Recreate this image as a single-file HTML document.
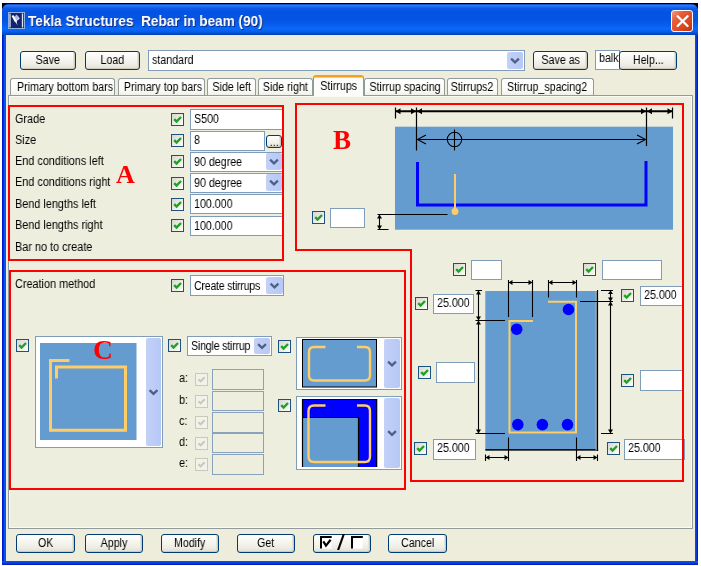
<!DOCTYPE html>
<html lang="en"><head><meta charset="utf-8"><title>Tekla Structures Rebar in beam (90)</title>
<style>
*{box-sizing:border-box;margin:0;padding:0}
html,body{width:701px;height:566px;overflow:hidden;background:#fff}
body{position:relative;font-family:"Liberation Sans",sans-serif;font-size:12px;color:#000;line-height:13px}
.a{position:absolute}
#win{left:2px;top:4px;width:696px;height:561px;background:linear-gradient(to bottom,#0a50e8 0,#0a50e8 558px,#0a3fd8 559px,#0018b8 561px);border-radius:7px 7px 0 0;overflow:hidden}
#tbar{left:0;top:0;width:696px;height:31px;background:linear-gradient(to bottom,#0a3fc0 0%,#2f7df0 5%,#1a6cf0 9%,#0a5ce8 14%,#0553e2 24%,#0553e2 50%,#075ef0 68%,#0a68fa 80%,#0760ee 88%,#0450d6 94%,#0340b0 100%)}
#ttl{left:26px;top:8.4px;color:#fff;font-weight:bold;font-size:15.5px;line-height:17px;white-space:nowrap;text-shadow:1px 1px 0 #0a2a80;transform:scaleX(0.877);transform-origin:0 0}
#client{left:4px;top:31px;width:689px;height:526px;background:#eeeddc}
.btn{position:absolute;height:18px;border:1px solid #003c74;border-radius:3px;background:linear-gradient(to bottom,#fff 0%,#f6f5ef 40%,#ecebe3 80%,#d9d4c6 100%);text-align:center;font-size:12px;line-height:16px;white-space:nowrap;box-shadow:inset -1px -1px 0 #cfcabb,inset -2px -2px 0 #e6e3d8}
.inp{position:absolute;border:1px solid #7f9db9;background:#fff;font-size:12px;line-height:13px;white-space:nowrap;overflow:hidden}
.inp span{position:absolute;left:3px;transform:scaleX(.89);transform-origin:0 0}
.sq{display:inline-block;transform:scaleX(.89)}
.lbl,.sq,.inp span,#ttl,.big{will-change:transform}
.dis{background:#eeeede;border-color:#8aa3bd}
.arr{position:absolute;background:linear-gradient(to right,#c3d1f8,#b7c8f6);border-radius:2px}
.tab{position:absolute;top:78px;height:17px;border:1px solid #919b9c;border-bottom:none;border-radius:3px 3px 0 0;background:linear-gradient(to bottom,#fff,#fbfbf8 70%,#f1f0e8);font-size:12px;line-height:17px;text-align:center;white-space:nowrap}
.red{position:absolute;background:#f00;z-index:5}
.lbl{position:absolute;white-space:nowrap;font-size:12px;line-height:13px;transform:scaleX(.905);transform-origin:0 0}
.big{position:absolute;font-family:"Liberation Serif",serif;font-weight:bold;font-size:26px;line-height:26px;color:#f00}
svg{position:absolute;overflow:visible}
</style></head>
<body>
<div class="a" style="left:2px;top:3px;width:696px;height:6px;background:#000"></div>
<div id="win" class="a">
<div id="tbar" class="a"></div>
<svg style="left:6px;top:8px" width="17" height="17" viewBox="0 0 17 17"><rect x="0.5" y="0.5" width="16" height="16" fill="#13246e" stroke="#8fb0e0"/><path d="M2 1.5V15.5M14.5 1.5V15.5" stroke="#dfe8f8" stroke-width="1.3"/><path d="M4.5 4L9.5 13.5L8.5 9L12 6.5Z" fill="#fff"/><path d="M8.5 2.5L11.5 5.5L8.5 8.5L5.8 5.5Z" fill="#a8b8ee"/><path d="M4.5 3.5L8 10" stroke="#fff" stroke-width="2"/></svg>
<div id="ttl" class="a">Tekla Structures&nbsp; Rebar in beam (90)</div>
<div class="a" style="left:669px;top:6px;width:22px;height:21.5px;border:1px solid #fff;border-radius:3px;background:linear-gradient(135deg,#f29a80 0%,#e6603a 30%,#dc4820 65%,#c23410 100%)"></div>
<svg style="left:669.5px;top:6.2px" width="21" height="21" viewBox="0 0 21 21"><path d="M5.6 6.2L15.6 16M15.6 6.2L5.6 16" stroke="#fff" stroke-width="2.3" stroke-linecap="round"/></svg>
<div class="a" style="left:0;top:31px;width:4px;height:530px;background:linear-gradient(to right,#0014cc 0,#0426da 35%,#0a5aea 65%,#0a54e6 100%)"></div>
<div class="a" style="left:693px;top:31px;width:3px;height:530px;background:linear-gradient(to right,#0a54e6 0,#0838dc 45%,#0016b8 100%)"></div>
<div class="a" style="left:0;top:557px;width:696px;height:4px;background:linear-gradient(to bottom,#0a54e6 0,#0a46e0 40%,#0018b8 100%)"></div>
<div id="client" class="a"></div>
</div>
<div class="btn" style="left:20px;top:51px;width:56px;height:19px;line-height:17px;"><span class="sq">Save</span></div>
<div class="btn" style="left:85px;top:51px;width:55px;height:19px;line-height:17px;"><span class="sq">Load</span></div>
<div class="inp " style="left:148px;top:50px;width:377px;height:21px"><span style="top:3px;">standard</span></div>
<div class="arr" style="left:507px;top:52px;width:16px;height:17px"></div>
<svg style="left:0;top:0" width="701" height="566"><path d="M511.1 58.7L515.0 62.4L518.9 58.7" fill="none" stroke="#4d6185" stroke-width="2.3"/></svg>
<div class="btn" style="left:533px;top:51px;width:55px;height:19px;line-height:17px;"><span class="sq">Save as</span></div>
<div class="inp " style="left:595px;top:50px;width:25px;height:20px"><span style="top:1px;">balk</span></div>
<div class="btn" style="left:619px;top:51px;width:58px;height:19px;line-height:17px;"><span class="sq">Help...</span></div>
<div class="a" style="left:8px;top:95px;width:685px;height:434px;border:1px solid #919b9c;background:#eeeede;box-shadow:inset 0 0 0 1px #fbfaf4"></div>
<div class="tab" style="left:10px;width:105px"><span class="sq">Primary bottom bars</span></div>
<div class="tab" style="left:118px;width:87px"><span class="sq">Primary top bars</span></div>
<div class="tab" style="left:207px;width:49px"><span class="sq">Side left</span></div>
<div class="tab" style="left:258px;width:55px"><span class="sq">Side right</span></div>
<div class="tab" style="left:364px;width:81px"><span class="sq">Stirrup spacing</span></div>
<div class="tab" style="left:447px;width:51px"><span class="sq">Stirrups2</span></div>
<div class="tab" style="left:501px;width:93px"><span class="sq">Stirrup_spacing2</span></div>
<div class="tab" style="left:313px;top:75px;width:51px;height:21px;background:#fcfcfa;border-top:2px solid #f3a01e;box-shadow:inset 0 1px 0 #ffcc55;line-height:18px;z-index:2"><span class="sq">Stirrups</span></div>
<div class="lbl" style="left:15px;top:113px;">Grade</div>
<svg style="left:171px;top:113px" width="13" height="13" viewBox="0 0 13 13"><defs><linearGradient id="g171_113" x1="0" y1="0" x2="1" y2="1"><stop offset="0" stop-color="#d6d5cd"/><stop offset="1" stop-color="#ffffff"/></linearGradient></defs><rect x="0.5" y="0.5" width="12" height="12" fill="url(#g171_113)" stroke="#1c5180"/><path d="M3.2 6.1L5.6 8.6L10 4" fill="none" stroke="#21a121" stroke-width="2.4"/></svg>
<div class="inp " style="left:190px;top:109px;width:93px;height:21px"><span style="top:3px;">S500</span></div>
<div class="lbl" style="left:15px;top:134px;">Size</div>
<svg style="left:171px;top:134px" width="13" height="13" viewBox="0 0 13 13"><defs><linearGradient id="g171_134" x1="0" y1="0" x2="1" y2="1"><stop offset="0" stop-color="#d6d5cd"/><stop offset="1" stop-color="#ffffff"/></linearGradient></defs><rect x="0.5" y="0.5" width="12" height="12" fill="url(#g171_134)" stroke="#1c5180"/><path d="M3.2 6.1L5.6 8.6L10 4" fill="none" stroke="#21a121" stroke-width="2.4"/></svg>
<div class="inp " style="left:190px;top:131px;width:75px;height:20px"><span style="top:2px;">8</span></div>
<div class="btn" style="left:266px;top:135px;width:16px;height:13px;line-height:9px;font-size:11px;overflow:hidden"><span style="position:relative;top:1.6px;left:0.3px;color:#222;will-change:transform">...</span></div>
<div class="lbl" style="left:15px;top:155px;">End conditions left</div>
<svg style="left:171px;top:155px" width="13" height="13" viewBox="0 0 13 13"><defs><linearGradient id="g171_155" x1="0" y1="0" x2="1" y2="1"><stop offset="0" stop-color="#d6d5cd"/><stop offset="1" stop-color="#ffffff"/></linearGradient></defs><rect x="0.5" y="0.5" width="12" height="12" fill="url(#g171_155)" stroke="#1c5180"/><path d="M3.2 6.1L5.6 8.6L10 4" fill="none" stroke="#21a121" stroke-width="2.4"/></svg>
<div class="inp " style="left:190px;top:152px;width:93px;height:20px"><span style="top:3px;">90 degree</span></div>
<div class="arr" style="left:266px;top:153px;width:16px;height:17px"></div>
<svg style="left:0;top:0" width="701" height="566"><path d="M270.1 159.7L274.0 163.4L277.9 159.7" fill="none" stroke="#4d6185" stroke-width="2.3"/></svg>
<div class="lbl" style="left:15px;top:176px;">End conditions right</div>
<svg style="left:171px;top:177px" width="13" height="13" viewBox="0 0 13 13"><defs><linearGradient id="g171_177" x1="0" y1="0" x2="1" y2="1"><stop offset="0" stop-color="#d6d5cd"/><stop offset="1" stop-color="#ffffff"/></linearGradient></defs><rect x="0.5" y="0.5" width="12" height="12" fill="url(#g171_177)" stroke="#1c5180"/><path d="M3.2 6.1L5.6 8.6L10 4" fill="none" stroke="#21a121" stroke-width="2.4"/></svg>
<div class="inp " style="left:190px;top:173px;width:93px;height:20px"><span style="top:3px;">90 degree</span></div>
<div class="arr" style="left:266px;top:174px;width:16px;height:17px"></div>
<svg style="left:0;top:0" width="701" height="566"><path d="M270.1 180.7L274.0 184.4L277.9 180.7" fill="none" stroke="#4d6185" stroke-width="2.3"/></svg>
<div class="lbl" style="left:15px;top:198px;">Bend lengths left</div>
<svg style="left:171px;top:198px" width="13" height="13" viewBox="0 0 13 13"><defs><linearGradient id="g171_198" x1="0" y1="0" x2="1" y2="1"><stop offset="0" stop-color="#d6d5cd"/><stop offset="1" stop-color="#ffffff"/></linearGradient></defs><rect x="0.5" y="0.5" width="12" height="12" fill="url(#g171_198)" stroke="#1c5180"/><path d="M3.2 6.1L5.6 8.6L10 4" fill="none" stroke="#21a121" stroke-width="2.4"/></svg>
<div class="inp " style="left:190px;top:194px;width:93px;height:20px"><span style="top:3px;">100.000</span></div>
<div class="lbl" style="left:15px;top:219px;">Bend lengths right</div>
<svg style="left:171px;top:219px" width="13" height="13" viewBox="0 0 13 13"><defs><linearGradient id="g171_219" x1="0" y1="0" x2="1" y2="1"><stop offset="0" stop-color="#d6d5cd"/><stop offset="1" stop-color="#ffffff"/></linearGradient></defs><rect x="0.5" y="0.5" width="12" height="12" fill="url(#g171_219)" stroke="#1c5180"/><path d="M3.2 6.1L5.6 8.6L10 4" fill="none" stroke="#21a121" stroke-width="2.4"/></svg>
<div class="inp " style="left:190px;top:216px;width:93px;height:20px"><span style="top:2.5px;">100.000</span></div>
<div class="lbl" style="left:15px;top:241px;">Bar no to create</div>
<div class="big" style="left:116px;top:162px">A</div>
<div class="red" style="left:8px;top:105px;width:276px;height:2px"></div>
<div class="red" style="left:8px;top:259px;width:276px;height:2px"></div>
<div class="red" style="left:8px;top:105px;width:2px;height:156px"></div>
<div class="red" style="left:282px;top:105px;width:2px;height:156px"></div>
<div class="btn" style="left:16px;top:534px;width:59px;height:19px;line-height:17px;"><span class="sq">OK</span></div>
<div class="btn" style="left:85px;top:534px;width:58px;height:19px;line-height:17px;"><span class="sq">Apply</span></div>
<div class="btn" style="left:161px;top:534px;width:58px;height:19px;line-height:17px;"><span class="sq">Modify</span></div>
<div class="btn" style="left:237px;top:534px;width:58px;height:19px;line-height:17px;"><span class="sq">Get</span></div>
<div class="btn" style="left:313px;top:534px;width:58px;height:19px;line-height:17px;"><span class="sq"></span></div>
<div class="btn" style="left:388px;top:534px;width:59px;height:19px;line-height:17px;"><span class="sq">Cancel</span></div>
<div class="a" style="left:336.9px;top:531px;font-size:22px;line-height:24px;z-index:3;will-change:transform;transform:scaleX(1.3);transform-origin:0 0">/</div>
<svg style="left:0;top:0" width="701" height="566"><rect x="321" y="537" width="10.5" height="11.5" fill="#fff"/><rect x="352" y="537" width="10.5" height="11.5" fill="#fff"/><path d="M321 548.5V537H331.7" fill="none" stroke="#000" stroke-width="2"/><path d="M352 548.5V537H362.8" fill="none" stroke="#000" stroke-width="2"/><path d="M323.3 541.4L326 545.6L330.6 539.8" fill="none" stroke="#000" stroke-width="2.2"/></svg>
<div class="big" style="left:332.6px;top:126.6px;font-size:27px;line-height:27px">B</div>
<div class="red" style="left:295px;top:103px;width:389px;height:2px"></div>
<div class="red" style="left:295px;top:103px;width:2px;height:148px"></div>
<div class="red" style="left:295px;top:249px;width:117px;height:2px"></div>
<div class="red" style="left:410px;top:249px;width:2px;height:233px"></div>
<div class="red" style="left:410px;top:480px;width:274px;height:2px"></div>
<div class="red" style="left:682px;top:103px;width:2px;height:379px"></div>
<svg style="left:0;top:0" width="701" height="566"><rect x="395" y="126.7" width="278" height="103" fill="#659ccf"/><path d="M395.5 107.5V118.5M672.5 107.5V118.5M416.5 107.5V150.5M646.5 107.5V146" stroke="#000" stroke-width="1.2" fill="none"/><path d="M395.5 111.2H672.5" stroke="#000" stroke-width="1.9" fill="none"/><path d="M395.5 111.2l5-3v6zM416 111.2l-5-3v6zM417 111.2l5-3v6zM646 111.2l-5-3v6zM647 111.2l5-3v6zM672.5 111.2l-5-3v6z" fill="#000"/><path d="M417 139.5H646M426 135L417.5 139.5L426 144M637 135L645.5 139.5L637 144" stroke="#000" stroke-width="1.1" fill="none"/><circle cx="454.5" cy="139.5" r="7.2" fill="none" stroke="#000" stroke-width="1.1"/><path d="M454.5 129.5V150.5" stroke="#000" stroke-width="1.1"/><path d="M417.5 162V205H646V161" stroke="#0000ff" stroke-width="3" fill="none"/><path d="M455 174V210" stroke="#ffcc66" stroke-width="2"/><circle cx="455" cy="211.5" r="3.4" fill="#ffcc66"/><path d="M377.5 214.5H447.5M379.5 214.5V229.5M377.5 229.5H388.5" stroke="#000" stroke-width="1.1" fill="none"/><path d="M379.5 214.5l-2.5 4h5zM379.5 229.5l-2.5-4h5z" fill="#000"/></svg>
<svg style="left:312px;top:211px" width="13" height="13" viewBox="0 0 13 13"><defs><linearGradient id="g312_211" x1="0" y1="0" x2="1" y2="1"><stop offset="0" stop-color="#d6d5cd"/><stop offset="1" stop-color="#ffffff"/></linearGradient></defs><rect x="0.5" y="0.5" width="12" height="12" fill="url(#g312_211)" stroke="#1c5180"/><path d="M3.2 6.1L5.6 8.6L10 4" fill="none" stroke="#21a121" stroke-width="2.4"/></svg>
<div class="inp " style="left:330px;top:208px;width:35px;height:20px"></div>
<svg style="left:0;top:0" width="701" height="566"><rect x="485.3" y="448.8" width="112.8" height="1.9" fill="#111"/><rect x="595.4" y="291" width="1.6" height="159" fill="#808890"/><rect x="597" y="290" width="1.1" height="161" fill="#000"/><rect x="485.3" y="291" width="110.2" height="158" fill="#659ccf"/><path d="M533 321H509.5V432.5H576V301.7H548" stroke="#ffcc66" stroke-width="2" fill="none"/><circle cx="516.7" cy="329.2" r="5.8" fill="#0000ff"/><circle cx="568.5" cy="309.5" r="5.8" fill="#0000ff"/><circle cx="517.8" cy="424.6" r="5.8" fill="#0000ff"/><circle cx="542.4" cy="424.6" r="5.8" fill="#0000ff"/><circle cx="567.5" cy="424.6" r="5.8" fill="#0000ff"/><path d="M508.5 282.5H532.5M508.5 280V317M532.5 280V317M548.5 282.5H576.5M548.5 280V297.5M576.5 280V297.5" stroke="#000" stroke-width="1.1" fill="none"/><path d="M508.5 282.5l4-2.5v5zM532.5 282.5l-4-2.5v5zM548.5 282.5l4-2.5v5zM576.5 282.5l-4-2.5v5z" fill="#000"/><path d="M478.5 290.5V433.5M475.5 290.5H482M475.5 320.5H505M475.5 433.5H505" stroke="#000" stroke-width="1.1" fill="none"/><path d="M478.5 290.5l-2.5 4h5zM478.5 320.5l-2.5-4h5zM478.5 320.5l-2.5 4h5zM478.5 433.5l-2.5-4h5z" fill="#000"/><path d="M610.5 290.5V433.5M601 290.5H613M580 301.5H613M601 433.5H613" stroke="#000" stroke-width="1.1" fill="none"/><path d="M610.5 290.5l-2.5 3.6h5zM610.5 301.5l-2.5-4h5zM610.5 301.5l-2.5 4h5zM610.5 433.5l-2.5-4h5z" fill="#000"/><path d="M485.5 457.5H508.5M485.5 454.5V461M508.5 437.5V461M576.5 457.5H597.5M576.5 437.5V461M597.5 454.5V461" stroke="#000" stroke-width="1.1" fill="none"/><path d="M485.5 457.5l4-2.5v5zM508.5 457.5l-4-2.5v5zM576.5 457.5l4-2.5v5zM597.5 457.5l-4-2.5v5z" fill="#000"/></svg>
<svg style="left:453px;top:263px" width="13" height="13" viewBox="0 0 13 13"><defs><linearGradient id="g453_263" x1="0" y1="0" x2="1" y2="1"><stop offset="0" stop-color="#d6d5cd"/><stop offset="1" stop-color="#ffffff"/></linearGradient></defs><rect x="0.5" y="0.5" width="12" height="12" fill="url(#g453_263)" stroke="#1c5180"/><path d="M3.2 6.1L5.6 8.6L10 4" fill="none" stroke="#21a121" stroke-width="2.4"/></svg>
<div class="inp " style="left:471px;top:260px;width:31px;height:20px"></div>
<svg style="left:583px;top:263px" width="13" height="13" viewBox="0 0 13 13"><defs><linearGradient id="g583_263" x1="0" y1="0" x2="1" y2="1"><stop offset="0" stop-color="#d6d5cd"/><stop offset="1" stop-color="#ffffff"/></linearGradient></defs><rect x="0.5" y="0.5" width="12" height="12" fill="url(#g583_263)" stroke="#1c5180"/><path d="M3.2 6.1L5.6 8.6L10 4" fill="none" stroke="#21a121" stroke-width="2.4"/></svg>
<div class="inp " style="left:602px;top:260px;width:60px;height:20px"></div>
<svg style="left:415px;top:297px" width="13" height="13" viewBox="0 0 13 13"><defs><linearGradient id="g415_297" x1="0" y1="0" x2="1" y2="1"><stop offset="0" stop-color="#d6d5cd"/><stop offset="1" stop-color="#ffffff"/></linearGradient></defs><rect x="0.5" y="0.5" width="12" height="12" fill="url(#g415_297)" stroke="#1c5180"/><path d="M3.2 6.1L5.6 8.6L10 4" fill="none" stroke="#21a121" stroke-width="2.4"/></svg>
<div class="inp " style="left:433px;top:294px;width:41px;height:20px"><span style="top:2px;">25.000</span></div>
<svg style="left:418px;top:366px" width="13" height="13" viewBox="0 0 13 13"><defs><linearGradient id="g418_366" x1="0" y1="0" x2="1" y2="1"><stop offset="0" stop-color="#d6d5cd"/><stop offset="1" stop-color="#ffffff"/></linearGradient></defs><rect x="0.5" y="0.5" width="12" height="12" fill="url(#g418_366)" stroke="#1c5180"/><path d="M3.2 6.1L5.6 8.6L10 4" fill="none" stroke="#21a121" stroke-width="2.4"/></svg>
<div class="inp " style="left:436px;top:362px;width:39px;height:21px"></div>
<svg style="left:414px;top:442px" width="13" height="13" viewBox="0 0 13 13"><defs><linearGradient id="g414_442" x1="0" y1="0" x2="1" y2="1"><stop offset="0" stop-color="#d6d5cd"/><stop offset="1" stop-color="#ffffff"/></linearGradient></defs><rect x="0.5" y="0.5" width="12" height="12" fill="url(#g414_442)" stroke="#1c5180"/><path d="M3.2 6.1L5.6 8.6L10 4" fill="none" stroke="#21a121" stroke-width="2.4"/></svg>
<div class="inp " style="left:433px;top:439px;width:43px;height:21px"><span style="top:2px;">25.000</span></div>
<svg style="left:621px;top:289px" width="13" height="13" viewBox="0 0 13 13"><defs><linearGradient id="g621_289" x1="0" y1="0" x2="1" y2="1"><stop offset="0" stop-color="#d6d5cd"/><stop offset="1" stop-color="#ffffff"/></linearGradient></defs><rect x="0.5" y="0.5" width="12" height="12" fill="url(#g621_289)" stroke="#1c5180"/><path d="M3.2 6.1L5.6 8.6L10 4" fill="none" stroke="#21a121" stroke-width="2.4"/></svg>
<div class="inp " style="left:640px;top:286px;width:43px;height:20px"><span style="top:2px;">25.000</span></div>
<svg style="left:621px;top:374px" width="13" height="13" viewBox="0 0 13 13"><defs><linearGradient id="g621_374" x1="0" y1="0" x2="1" y2="1"><stop offset="0" stop-color="#d6d5cd"/><stop offset="1" stop-color="#ffffff"/></linearGradient></defs><rect x="0.5" y="0.5" width="12" height="12" fill="url(#g621_374)" stroke="#1c5180"/><path d="M3.2 6.1L5.6 8.6L10 4" fill="none" stroke="#21a121" stroke-width="2.4"/></svg>
<div class="inp " style="left:640px;top:370px;width:43px;height:21px"></div>
<svg style="left:607px;top:442px" width="13" height="13" viewBox="0 0 13 13"><defs><linearGradient id="g607_442" x1="0" y1="0" x2="1" y2="1"><stop offset="0" stop-color="#d6d5cd"/><stop offset="1" stop-color="#ffffff"/></linearGradient></defs><rect x="0.5" y="0.5" width="12" height="12" fill="url(#g607_442)" stroke="#1c5180"/><path d="M3.2 6.1L5.6 8.6L10 4" fill="none" stroke="#21a121" stroke-width="2.4"/></svg>
<div class="inp " style="left:624px;top:439px;width:61px;height:21px"><span style="top:2px;">25.000</span></div>
<div class="lbl" style="left:15px;top:278px;">Creation method</div>
<svg style="left:171px;top:279px" width="13" height="13" viewBox="0 0 13 13"><defs><linearGradient id="g171_279" x1="0" y1="0" x2="1" y2="1"><stop offset="0" stop-color="#d6d5cd"/><stop offset="1" stop-color="#ffffff"/></linearGradient></defs><rect x="0.5" y="0.5" width="12" height="12" fill="url(#g171_279)" stroke="#1c5180"/><path d="M3.2 6.1L5.6 8.6L10 4" fill="none" stroke="#21a121" stroke-width="2.4"/></svg>
<div class="inp " style="left:190px;top:275px;width:94px;height:21px"><span style="top:4px;letter-spacing:-0.3px">Create stirrups</span></div>
<div class="arr" style="left:266px;top:277px;width:17px;height:17px"></div>
<svg style="left:0;top:0" width="701" height="566"><path d="M270.6 283.7L274.5 287.4L278.4 283.7" fill="none" stroke="#4d6185" stroke-width="2.3"/></svg>
<svg style="left:16px;top:339px" width="13" height="13" viewBox="0 0 13 13"><defs><linearGradient id="g16_339" x1="0" y1="0" x2="1" y2="1"><stop offset="0" stop-color="#d6d5cd"/><stop offset="1" stop-color="#ffffff"/></linearGradient></defs><rect x="0.5" y="0.5" width="12" height="12" fill="url(#g16_339)" stroke="#1c5180"/><path d="M3.2 6.1L5.6 8.6L10 4" fill="none" stroke="#21a121" stroke-width="2.4"/></svg>
<div class="inp " style="left:35px;top:336px;width:128px;height:112px"></div>
<svg style="left:0;top:0" width="701" height="566"><rect x="40" y="343" width="96.5" height="97" fill="#659ccf"/><path d="M50.5 431.5V360.5H69.5" stroke="#ffcc66" stroke-width="3" fill="none"/><path d="M56.5 378.5V367H125.5V430.2H50" stroke="#ffcc66" stroke-width="3" fill="none"/></svg>
<div class="arr" style="left:146px;top:338px;width:15px;height:108px"></div>
<svg style="left:0;top:0" width="701" height="566"><path d="M149.6 390.2L153.5 393.9L157.4 390.2" fill="none" stroke="#4d6185" stroke-width="2.3"/></svg>
<div class="big" style="left:93.3px;top:335.6px;font-size:27.5px;line-height:27.5px">C</div>
<svg style="left:168px;top:339px" width="13" height="13" viewBox="0 0 13 13"><defs><linearGradient id="g168_339" x1="0" y1="0" x2="1" y2="1"><stop offset="0" stop-color="#d6d5cd"/><stop offset="1" stop-color="#ffffff"/></linearGradient></defs><rect x="0.5" y="0.5" width="12" height="12" fill="url(#g168_339)" stroke="#1c5180"/><path d="M3.2 6.1L5.6 8.6L10 4" fill="none" stroke="#21a121" stroke-width="2.4"/></svg>
<div class="inp " style="left:187px;top:336px;width:85px;height:20px"><span style="top:3px;letter-spacing:-0.25px">Single stirrup</span></div>
<div class="arr" style="left:254px;top:338px;width:16px;height:16px"></div>
<svg style="left:0;top:0" width="701" height="566"><path d="M258.1 344.2L262.0 347.9L265.9 344.2" fill="none" stroke="#4d6185" stroke-width="2.3"/></svg>
<div class="lbl" style="left:179px;top:372px;">a:</div>
<svg style="left:195px;top:373px" width="13" height="13" viewBox="0 0 13 13"><rect x="0.5" y="0.5" width="12" height="12" fill="#f3f2ea" stroke="#cac8bb"/><path d="M3.5 6.3L5.6 8.4L9.6 4.2" fill="none" stroke="#c9c7ba" stroke-width="2"/></svg>
<div class="inp dis" style="left:212px;top:369px;width:52px;height:21px"></div>
<div class="lbl" style="left:179px;top:394px;">b:</div>
<svg style="left:195px;top:395px" width="13" height="13" viewBox="0 0 13 13"><rect x="0.5" y="0.5" width="12" height="12" fill="#f3f2ea" stroke="#cac8bb"/><path d="M3.5 6.3L5.6 8.4L9.6 4.2" fill="none" stroke="#c9c7ba" stroke-width="2"/></svg>
<div class="inp dis" style="left:212px;top:391px;width:52px;height:20px"></div>
<div class="lbl" style="left:179px;top:415px;">c:</div>
<svg style="left:195px;top:416px" width="13" height="13" viewBox="0 0 13 13"><rect x="0.5" y="0.5" width="12" height="12" fill="#f3f2ea" stroke="#cac8bb"/><path d="M3.5 6.3L5.6 8.4L9.6 4.2" fill="none" stroke="#c9c7ba" stroke-width="2"/></svg>
<div class="inp dis" style="left:212px;top:412px;width:52px;height:21px"></div>
<div class="lbl" style="left:179px;top:436px;">d:</div>
<svg style="left:195px;top:437px" width="13" height="13" viewBox="0 0 13 13"><rect x="0.5" y="0.5" width="12" height="12" fill="#f3f2ea" stroke="#cac8bb"/><path d="M3.5 6.3L5.6 8.4L9.6 4.2" fill="none" stroke="#c9c7ba" stroke-width="2"/></svg>
<div class="inp dis" style="left:212px;top:433px;width:52px;height:20px"></div>
<div class="lbl" style="left:179px;top:457px;">e:</div>
<svg style="left:195px;top:458px" width="13" height="13" viewBox="0 0 13 13"><rect x="0.5" y="0.5" width="12" height="12" fill="#f3f2ea" stroke="#cac8bb"/><path d="M3.5 6.3L5.6 8.4L9.6 4.2" fill="none" stroke="#c9c7ba" stroke-width="2"/></svg>
<div class="inp dis" style="left:212px;top:454px;width:52px;height:21px"></div>
<svg style="left:278px;top:340px" width="13" height="13" viewBox="0 0 13 13"><defs><linearGradient id="g278_340" x1="0" y1="0" x2="1" y2="1"><stop offset="0" stop-color="#d6d5cd"/><stop offset="1" stop-color="#ffffff"/></linearGradient></defs><rect x="0.5" y="0.5" width="12" height="12" fill="url(#g278_340)" stroke="#1c5180"/><path d="M3.2 6.1L5.6 8.6L10 4" fill="none" stroke="#21a121" stroke-width="2.4"/></svg>
<svg style="left:278px;top:399px" width="13" height="13" viewBox="0 0 13 13"><defs><linearGradient id="g278_399" x1="0" y1="0" x2="1" y2="1"><stop offset="0" stop-color="#d6d5cd"/><stop offset="1" stop-color="#ffffff"/></linearGradient></defs><rect x="0.5" y="0.5" width="12" height="12" fill="url(#g278_399)" stroke="#1c5180"/><path d="M3.2 6.1L5.6 8.6L10 4" fill="none" stroke="#21a121" stroke-width="2.4"/></svg>
<div class="inp " style="left:296px;top:337px;width:106px;height:53px"></div>
<svg style="left:0;top:0" width="701" height="566"><rect x="302.5" y="339.5" width="74" height="47.5" fill="#659ccf" stroke="#000" stroke-width="1"/><path d="M325.5 347H314Q309 347 309 352V375.5Q309 380.5 314 380.5H365Q370 380.5 370 375.5V352Q370 347 365 347H357" stroke="#ffcc66" stroke-width="2.4" fill="none"/></svg>
<div class="arr" style="left:384px;top:339px;width:16px;height:49px"></div>
<svg style="left:0;top:0" width="701" height="566"><path d="M388.1 361.7L392.0 365.4L395.9 361.7" fill="none" stroke="#4d6185" stroke-width="2.3"/></svg>
<div class="inp " style="left:296px;top:396px;width:106px;height:74px"></div>
<svg style="left:0;top:0" width="701" height="566"><rect x="302" y="399" width="75" height="68" fill="#0000ff"/><rect x="302" y="417.5" width="56.5" height="49.5" fill="#659ccf"/><path d="M302.5 399V467M302 399.5H377M376.7 399V467M302 417.5H358.5V467" stroke="#000" stroke-width="1.2" fill="none"/><path d="M325.5 405.5H314Q308.5 405.5 308.5 411V456.5Q308.5 462 314 462H365Q370 462 370 456.5V411Q370 405.5 365 405.5H357" stroke="#ffcc66" stroke-width="2.4" fill="none"/></svg>
<div class="arr" style="left:384px;top:398px;width:16px;height:70px"></div>
<svg style="left:0;top:0" width="701" height="566"><path d="M388.1 431.2L392.0 434.9L395.9 431.2" fill="none" stroke="#4d6185" stroke-width="2.3"/></svg>
<div class="red" style="left:9px;top:270px;width:397px;height:2px"></div>
<div class="red" style="left:9px;top:488px;width:397px;height:2px"></div>
<div class="red" style="left:9px;top:270px;width:2px;height:220px"></div>
<div class="red" style="left:404px;top:270px;width:2px;height:220px"></div>
</body></html>
